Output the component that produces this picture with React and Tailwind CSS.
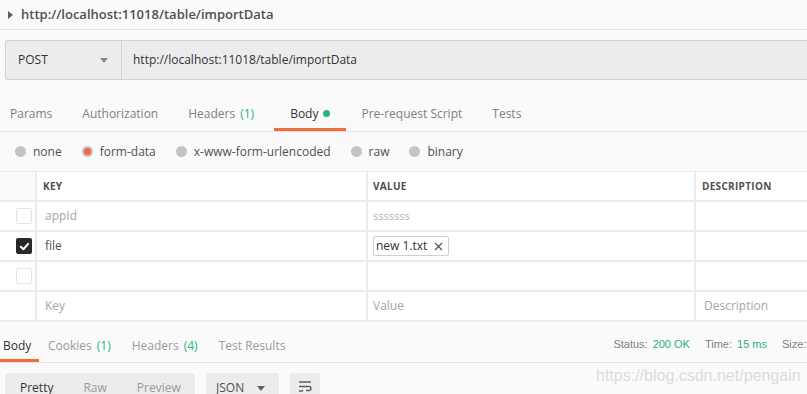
import React from 'react';

const font = { fontFamily: '"Open Sans", "Liberation Sans", sans-serif' };
const arial = { fontFamily: '"Liberation Sans", Arial, sans-serif' };

const Radio = ({ label, active }) => (
  <div className="flex items-center">
    <span className="w-[11px] h-[11px] rounded-full bg-[#c4c4c4] flex items-center justify-center">
      {active && <span className="w-[7px] h-[7px] rounded-full bg-[#f26b3a]" />}
    </span>
    <span className="ml-[7px] text-[12px] text-[#505050]">{label}</span>
  </div>
);

const Checkbox = ({ checked }) =>
  checked ? (
    <span className="w-[16px] h-[16px] rounded-[2px] bg-[#282828] flex items-center justify-center">
      <svg width="11" height="11" viewBox="0 0 12 12">
        <path d="M2 6.3 L4.8 9 L10 3.2" fill="none" stroke="#fff" strokeWidth="2.2" strokeLinecap="round" strokeLinejoin="round" />
      </svg>
    </span>
  ) : (
    <span className="w-[16px] h-[16px] rounded-[2px] bg-white border border-[#e3e3e3]" />
  );

const Row = ({ check, keyCell, valueCell, descCell }) => (
  <div className="flex h-[30px] border-b-2 border-[#ebebeb]">
    <div className="w-[35px] flex items-center justify-end pr-[3px] bg-white">{check}</div>
    <div className="w-[2px] bg-[#ebebeb]" />
    <div className="w-[329px] flex items-center pl-[8px] bg-white text-[12px]">{keyCell}</div>
    <div className="w-[2px] bg-[#ebebeb]" />
    <div className="w-[326px] flex items-center pl-[5px] bg-white text-[12px]">{valueCell}</div>
    <div className="w-[2px] bg-[#ebebeb]" />
    <div className="flex-1 flex items-center pl-[8px] bg-white text-[12px]">{descCell}</div>
  </div>
);

export default function App() {
  return (
    <div className="w-[807px] h-[394px] overflow-hidden bg-[#fafafa] relative" style={font}>
      {/* Title */}
      <div className="h-[30px] flex items-center border-b border-[#e6e6e6] pl-[8px]">
        <svg width="5" height="8" viewBox="0 0 5 8"><path d="M0 0 L5 4 L0 8 Z" fill="#606060" /></svg>
        <span className="ml-[8px] text-[13px] font-semibold text-[#505050]">http://localhost:11018/table/importData</span>
      </div>

      {/* Request bar */}
      <div className="mt-[10px] ml-[5px] h-[40px] flex bg-[#ececec] border-y border-l border-[#d4d4d4] rounded-l-[3px]">
        <div className="w-[116px] flex items-center justify-between pl-[12px] pr-[13px] border-r border-[#d4d4d4]">
          <span className="text-[12px] text-[#333]">POST</span>
          <svg width="8" height="5" viewBox="0 0 8 5"><path d="M0 0 L8 0 L4 5 Z" fill="#8a8a8a" /></svg>
        </div>
        <div className="flex items-center pl-[11px] text-[12px] text-[#333]">http://localhost:11018/table/importData</div>
      </div>

      {/* Tabs */}
      <div className="mt-[16px] h-[36px] flex border-b border-[#e3e3e3] text-[12px] text-[#808080]">
        <div className="ml-[10px] flex items-center">Params</div>
        <div className="ml-[30px] flex items-center">Authorization</div>
        <div className="ml-[30px] flex items-center">Headers <span className="ml-[5px] text-[#26b47f]">(1)</span></div>
        <div className="ml-[20px] px-[16px] flex items-center text-[#333] border-b-[3px] border-[#f26b3a] pt-[3px]">
          Body <span className="ml-[5px] w-[7px] h-[7px] rounded-full bg-[#26b47f]" />
        </div>
        <div className="ml-[15px] flex items-center">Pre-request Script</div>
        <div className="ml-[30px] flex items-center">Tests</div>
      </div>

      {/* Body types */}
      <div className="h-[39px] flex items-center pl-[15px] gap-[20px]">
        <Radio label="none" />
        <Radio label="form-data" active />
        <Radio label="x-www-form-urlencoded" />
        <Radio label="raw" />
        <Radio label="binary" />
      </div>

      {/* Table */}
      <div className="border-t border-[#ebebeb]">
        <div className="flex h-[30px] border-b-2 border-[#ebebeb] text-[10px] font-bold text-[#505050] tracking-[0.3px]">
          <div className="w-[35px] bg-[#fafafa]" />
          <div className="w-[2px] bg-[#ebebeb]" />
          <div className="w-[329px] flex items-center pl-[6px] bg-white">KEY</div>
          <div className="w-[2px] bg-[#ebebeb]" />
          <div className="w-[326px] flex items-center pl-[5px] bg-white">VALUE</div>
          <div className="w-[2px] bg-[#ebebeb]" />
          <div className="flex-1 flex items-center pl-[6px] bg-white">DESCRIPTION</div>
        </div>
        <Row
          check={<Checkbox />}
          keyCell={<span className="text-[#a6a6a6]">appId</span>}
          valueCell={<span className="text-[#b3b3b3] text-[11px]">sssssss</span>}
        />
        <Row
          check={<Checkbox checked />}
          keyCell={<span className="text-[#505050]">file</span>}
          valueCell={
            <span className="h-[20px] flex items-center border border-[#cfcfcf] rounded-[2px] pl-[2px] pr-[5px] text-[#333]">
              new 1.txt
              <svg className="ml-[7px]" width="9" height="9" viewBox="0 0 9 9">
                <path d="M1 1 L8 8 M8 1 L1 8" stroke="#555" strokeWidth="1.3" />
              </svg>
            </span>
          }
        />
        <Row check={<Checkbox />} />
        <Row
          check={null}
          keyCell={<span className="text-[#a6a6a6]">Key</span>}
          valueCell={<span className="text-[#a6a6a6]">Value</span>}
          descCell={<span className="text-[#a6a6a6]">Description</span>}
        />
      </div>

      {/* Response tabs */}
      <div className="h-[41px] flex border-b border-[#e3e3e3] text-[12px] text-[#9a9a9a]">
        <div className="w-[39px] pl-[3px] pt-[11px] flex items-center text-[#333] border-b-[3px] border-[#f26b3a]">Body</div>
        <div className="ml-[9px] pt-[11px] pb-[3px] flex items-center">Cookies <span className="ml-[5px] text-[#26b47f]">(1)</span></div>
        <div className="ml-[21px] pt-[11px] pb-[3px] flex items-center">Headers <span className="ml-[5px] text-[#26b47f]">(4)</span></div>
        <div className="ml-[21px] pt-[11px] pb-[3px] flex items-center">Test Results</div>
        <div className="ml-auto flex items-center text-[11px] pt-[4px]" style={arial}>
          <span className="text-[#808080]">Status:</span>
          <span className="ml-[5px] text-[#26b47f]">200 OK</span>
          <span className="ml-[15px] text-[#808080]">Time:</span>
          <span className="ml-[5px] text-[#26b47f]">15 ms</span>
          <span className="ml-[15px] text-[#808080] w-[25px]">Size:</span>
        </div>
      </div>

      {/* Response toolbar */}
      <div className="mt-[10px] flex pl-[5px] gap-[11px] text-[12px]">
        <div className="w-[190px] h-[30px] bg-[#ececec] rounded-[3px] flex items-center">
          <span className="ml-[15px] text-[#333]">Pretty</span>
          <span className="ml-[30px] text-[#9a9a9a]">Raw</span>
          <span className="ml-[30px] text-[#9a9a9a]">Preview</span>
        </div>
        <div className="w-[73px] h-[30px] bg-[#ececec] rounded-[3px] flex items-center justify-between pl-[10px] pr-[14px]">
          <span className="text-[#505050]">JSON</span>
          <svg width="8" height="5" viewBox="0 0 8 5"><path d="M0 0 L8 0 L4 5 Z" fill="#606060" /></svg>
        </div>
        <div className="w-[30px] h-[30px] bg-[#ececec] rounded-[3px] flex justify-center pt-[7px]">
          <svg width="14" height="14" viewBox="0 0 14 14" fill="none" stroke="#606060" strokeWidth="1.4">
            <path d="M1 2 H13 M1 6.5 H11 a2 2 0 0 1 0 4 H8 M1 11 H5" />
          </svg>
        </div>
      </div>

      {/* Watermark */}
      <div className="absolute left-[596px] top-[368px] text-[16px] leading-none text-[#dcdcdc]" style={arial}>
        https://blog.csdn.net/pengain
      </div>
    </div>
  );
}
